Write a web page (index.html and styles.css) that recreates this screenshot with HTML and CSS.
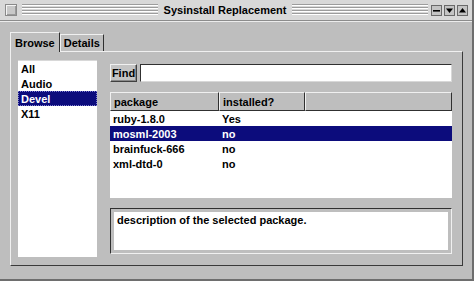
FILE: index.html
```html
<!DOCTYPE html>
<html lang="en">
<head>
  <meta charset="UTF-8" />
  <title>Sysinstall Replacement</title>
  <link rel="stylesheet" href="styles.css">
</head>
<body>
  <div class="window">
    <div class="titlebar">
      <span class="close-box"></span>
      <span class="stripes"></span>
      <span class="title">Sysinstall Replacement</span>
      <span class="stripes"></span>
      <span class="win-buttons">
        <span class="wbtn"><svg width="9" height="9" viewBox="0 0 9 9"><rect x="1" y="4" width="7" height="1.6" fill="#000"/></svg></span>
        <span class="wbtn"><svg width="9" height="9" viewBox="0 0 9 9"><path d="M1 2.5 H8 L4.5 7 Z" fill="#000"/></svg></span>
        <span class="wbtn"><svg width="9" height="9" viewBox="0 0 9 9"><path d="M1 6.5 H8 L4.5 2 Z" fill="#000"/></svg></span>
      </span>
    </div>

    <div class="content">
      <div class="tabs">
        <div class="tab active">Browse</div>
        <div class="tab">Details</div>
      </div>

      <div class="panel">
        <ul class="categories">
          <li>All</li>
          <li>Audio</li>
          <li class="selected">Devel</li>
          <li>X11</li>
        </ul>

        <div class="main">
          <div class="find-row">
            <button class="find-btn">Find</button>
            <input class="find-input" type="text" />
          </div>

          <div class="table">
            <div class="row head">
              <div class="cell c1">package</div>
              <div class="cell c2">installed?</div>
              <div class="cell c3"></div>
            </div>
            <div class="row">
              <div class="cell c1">ruby-1.8.0</div>
              <div class="cell c2">Yes</div>
            </div>
            <div class="row selected">
              <div class="cell c1">mosml-2003</div>
              <div class="cell c2">no</div>
            </div>
            <div class="row">
              <div class="cell c1">brainfuck-666</div>
              <div class="cell c2">no</div>
            </div>
            <div class="row">
              <div class="cell c1">xml-dtd-0</div>
              <div class="cell c2">no</div>
            </div>
          </div>

          <div class="desc">
            <div class="desc-inner">description of the selected package.</div>
          </div>
        </div>
      </div>
    </div>
  </div>
</body>
</html>
```

FILE: styles.css
```css
body {
  margin: 0;
  font-family: "Liberation Sans", Arial, sans-serif;
  font-size: 11px;
  font-weight: bold;
  color: #000;
  background: #bebebe;
}
.window {
  width: 474px;
  height: 281px;
  box-sizing: border-box;
  background: #bebebe;
  border-right: 2px solid #6e6e6e;
  border-bottom: 2px solid #6e6e6e;
  overflow: hidden;
}
.titlebar {
  height: 20px;
  display: flex;
  align-items: center;
  padding: 0 4px 0 5px;
  background: #d8d8d8;
  border-bottom: 1px solid #8c8c8c;
  box-shadow: 0 1px 0 #ececec;
}
.close-box {
  width: 10px;
  height: 10px;
  border: 1px solid #8a8a8a;
  background: #c8c8c8;
  box-shadow: inset 1px 1px 0 #f4f4f4, inset -1px -1px 0 #9a9a9a;
  margin-right: 5px;
}
.stripes {
  flex: 1;
  height: 12px;
  background: repeating-linear-gradient(to bottom, #9c9c9c 0 1px, #ffffff 1px 2px, transparent 2px 3px);
}
.title {
  padding: 0 6px;
  line-height: 14px;
}
.win-buttons {
  display: flex;
  gap: 2px;
  margin-left: 3px;
}
.wbtn {
  width: 9px;
  height: 9px;
  border: 1px solid #6a6a6a;
  background: #c4c4c4;
  display: flex;
}
.content {
  padding: 11px 9px 0 10px;
}
.tabs {
  display: flex;
  align-items: flex-end;
  height: 19px;
}
.tab {
  height: 16px;
  line-height: 16px;
  padding: 0 3px;
  border-top: 1px solid #f0f0f0;
  border-left: 1px solid #f0f0f0;
  border-right: 1px solid #303030;
}
.tab.active {
  height: 19px;
  line-height: 20px;
  padding: 0 4px 0 4px;
  position: relative;
  top: 1px;
  background: #bebebe;
}
.panel {
  height: 215px;
  box-sizing: border-box;
  display: flex;
  gap: 13px;
  padding: 8px 10px 8px 7px;
  border-top: 1px solid #f0f0f0;
  border-left: 1px solid #f0f0f0;
  border-right: 1px solid #3a3a3a;
  border-bottom: 1px solid #3a3a3a;
}
.categories {
  list-style: none;
  margin: 0;
  padding: 0;
  width: 79px;
  background: #fff;
  border-top: 1px solid #d8d8d8;
}
.categories li {
  height: 15px;
  line-height: 16px;
  padding-left: 3px;
}
.categories li.selected {
  background: #0c0c7c;
  color: #fff;
  outline: 1px dotted #7f7fd0;
  outline-offset: -1px;
}
.main {
  flex: 1;
  display: flex;
  flex-direction: column;
  padding-top: 4px;
}
.find-row {
  display: flex;
  gap: 3px;
  height: 18px;
}
.find-btn {
  width: 27px;
  padding: 0;
  font: inherit;
  background: #c4c4c4;
  border: 1px solid #404040;
  border-top-color: #f0f0f0;
  border-left-color: #f0f0f0;
  box-shadow: inset -1px -1px 0 #8a8a8a;
}
.find-input {
  flex: 1;
  margin: 0;
  padding: 0;
  background: #fff;
  border: 1px solid #d8d8d8;
  border-top-color: #303030;
  border-left-color: #303030;
}
.table {
  margin-top: 10px;
  height: 106px;
  background: #fff;
}
.row {
  display: flex;
  height: 15px;
  line-height: 16px;
}
.row.head {
  height: 19px;
  line-height: 18px;
  background: #bebebe;
}
.cell {
  padding-left: 3px;
  box-sizing: border-box;
}
.c1 { width: 109px; }
.c2 { width: 86px; }
.c3 { flex: 1; }
.head .cell {
  border-top: 1px solid #f0f0f0;
  border-left: 1px solid #f0f0f0;
  border-right: 1px solid #303030;
  border-bottom: 1px solid #303030;
}
.row.selected {
  background: #0c0c7c;
  color: #fff;
}
.desc {
  margin-top: 10px;
  height: 46px;
  box-sizing: border-box;
  padding: 3px;
  border: 1px solid #f0f0f0;
  border-top-color: #303030;
  border-left-color: #303030;
}
.desc-inner {
  height: 100%;
  box-sizing: border-box;
  background: #fff;
  padding: 2px 3px;
}
```
